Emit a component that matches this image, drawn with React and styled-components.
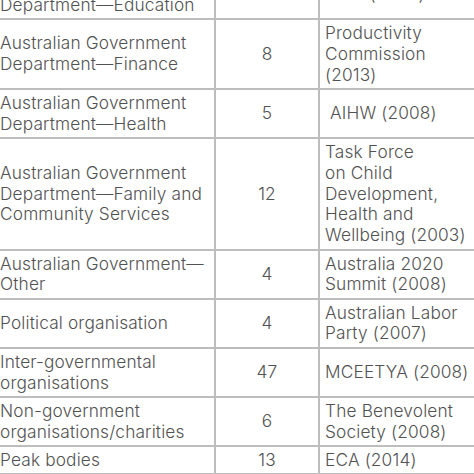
import React from "react";
import styled, { createGlobalStyle } from "styled-components";

const GlobalStyle = createGlobalStyle`
  html, body { margin: 0; padding: 0; background: #ffffff; }
  body { overflow: hidden; }
`;

const Viewport = styled.div`
  width: 474px;
  height: 474px;
  overflow: hidden;
  background: #ffffff;
`;

const Table = styled.table`
  margin-top: -29px;
  width: 560px;
  border-collapse: separate;
  border-spacing: 0;
  table-layout: fixed;
  font-family: Inter, "Liberation Sans", Arial, sans-serif;
  font-weight: 300;
  font-size: 17.3px;
  letter-spacing: 0.15px;
  line-height: 20.8px;
  color: #525252;
`;

const Col = styled.col`
  width: ${(p) => p.$w}px;
`;

const Cell = styled.td`
  box-sizing: border-box;
  vertical-align: middle;
  padding: 3px 0 2.5px ${(p) => p.$padLeft || 0}px;
  border-bottom: 2px solid #bdbdbd;
  border-right: ${(p) => (p.$divider ? "2px solid #bdbdbd" : "none")};
  text-align: ${(p) => (p.$center ? "center" : "left")};
  white-space: nowrap;
`;

const Line = styled.span`
  display: block;
  white-space: pre;
`;

const rows = [
  { org: ["Australian Government", "Department—Education"], n: "21", src: ["Field (2009)"] },
  { org: ["Australian Government", "Department—Finance"], n: "8", src: ["Productivity", "Commission", "(2013)"] },
  { org: ["Australian Government", "Department—Health"], n: "5", src: [" AIHW (2008)"] },
  {
    org: ["Australian Government", "Department—Family and", "Community Services"],
    n: "12",
    src: ["Task Force", "on Child", "Development,", "Health and", "Wellbeing (2003)"],
  },
  { org: ["Australian Government—", "Other"], n: "4", src: ["Australia 2020", "Summit (2008)"] },
  { org: ["Political organisation"], n: "4", src: ["Australian Labor", "Party (2007)"] },
  { org: ["Inter-governmental", "organisations"], n: "47", src: ["MCEETYA (2008)"] },
  { org: ["Non-government", "organisations/charities"], n: "6", src: ["The Benevolent", "Society (2008)"] },
  { org: ["Peak bodies"], n: "13", src: ["ECA (2014)"] },
];

const Lines = ({ items }) => items.map((t, i) => <Line key={i}>{t}</Line>);

export default function App() {
  return (
    <Viewport>
      <GlobalStyle />
      <Table>
        <colgroup>
          <Col $w={216} />
          <Col $w={104} />
          <Col $w={240} />
        </colgroup>
        <tbody>
          {rows.map((r, i) => (
            <tr key={i}>
              <Cell $divider>
                <Lines items={r.org} />
              </Cell>
              <Cell $divider $center>
                {r.n}
              </Cell>
              <Cell $padLeft={5}>
                <Lines items={r.src} />
              </Cell>
            </tr>
          ))}
        </tbody>
      </Table>
    </Viewport>
  );
}
